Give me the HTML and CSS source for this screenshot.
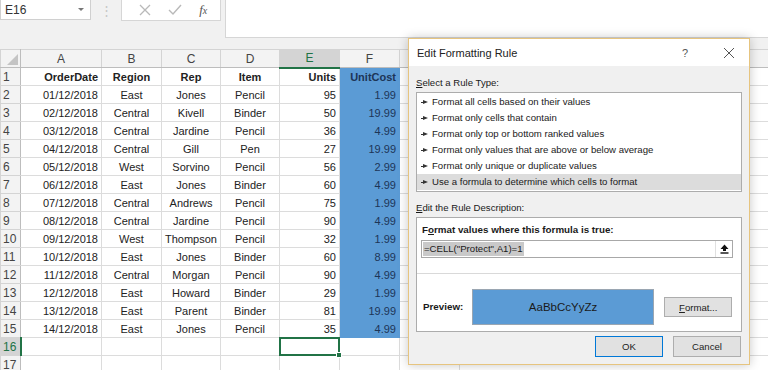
FILE: index.html
```html
<!DOCTYPE html>
<html lang="en">
<head>
    <meta charset="UTF-8">
    <title>Edit Formatting Rule</title>
    <link rel="stylesheet" href="styles.css">
</head>
<body>
    <div class="toolbar">
        <div class="namebox">
            <span>E16</span>
            <span class="caret"></span>
        </div>
        <div class="grip">&#8942;</div>
        <div class="fbuttons">
            <svg width="12" height="12" viewBox="0 0 12 12"><path d="M1 1 L11 11 M11 1 L1 11" stroke="#b9b9b9" stroke-width="1.3"/></svg>
            <svg width="14" height="12" viewBox="0 0 14 12"><path d="M1 6 L5 10 L13 1" stroke="#b9b9b9" stroke-width="1.4" fill="none"/></svg>
            <span class="fx">f<i>x</i></span>
        </div>
        <div class="formula"></div>
    </div>

    <table class="sheet">
        <colgroup>
            <col style="width:20px"><col style="width:81px"><col style="width:60px"><col style="width:59px"><col style="width:59px"><col style="width:60px"><col style="width:60px"><col style="width:60px"><col style="width:309px">
        </colgroup>
        <tr class="colhead">
            <th class="corner"><span class="tri"></span></th><th>A</th><th>B</th><th>C</th><th>D</th><th class="cur">E</th><th>F</th><th></th><th></th>
        </tr>
        <tr class="bold"><th>1</th><td class="r">OrderDate</td><td class="c">Region</td><td class="c">Rep</td><td class="c">Item</td><td class="r">Units</td><td class="r blue">UnitCost</td><td></td><td></td></tr>
        <tr><th>2</th><td class="r">01/12/2018</td><td class="c">East</td><td class="c">Jones</td><td class="c">Pencil</td><td class="r">95</td><td class="r blue">1.99</td><td></td><td></td></tr>
        <tr><th>3</th><td class="r">02/12/2018</td><td class="c">Central</td><td class="c">Kivell</td><td class="c">Binder</td><td class="r">50</td><td class="r blue">19.99</td><td></td><td></td></tr>
        <tr><th>4</th><td class="r">03/12/2018</td><td class="c">Central</td><td class="c">Jardine</td><td class="c">Pencil</td><td class="r">36</td><td class="r blue">4.99</td><td></td><td></td></tr>
        <tr><th>5</th><td class="r">04/12/2018</td><td class="c">Central</td><td class="c">Gill</td><td class="c">Pen</td><td class="r">27</td><td class="r blue">19.99</td><td></td><td></td></tr>
        <tr><th>6</th><td class="r">05/12/2018</td><td class="c">West</td><td class="c">Sorvino</td><td class="c">Pencil</td><td class="r">56</td><td class="r blue">2.99</td><td></td><td></td></tr>
        <tr><th>7</th><td class="r">06/12/2018</td><td class="c">East</td><td class="c">Jones</td><td class="c">Binder</td><td class="r">60</td><td class="r blue">4.99</td><td></td><td></td></tr>
        <tr><th>8</th><td class="r">07/12/2018</td><td class="c">Central</td><td class="c">Andrews</td><td class="c">Pencil</td><td class="r">75</td><td class="r blue">1.99</td><td></td><td></td></tr>
        <tr><th>9</th><td class="r">08/12/2018</td><td class="c">Central</td><td class="c">Jardine</td><td class="c">Pencil</td><td class="r">90</td><td class="r blue">4.99</td><td></td><td></td></tr>
        <tr><th>10</th><td class="r">09/12/2018</td><td class="c">West</td><td class="c">Thompson</td><td class="c">Pencil</td><td class="r">32</td><td class="r blue">1.99</td><td></td><td></td></tr>
        <tr><th>11</th><td class="r">10/12/2018</td><td class="c">East</td><td class="c">Jones</td><td class="c">Binder</td><td class="r">60</td><td class="r blue">8.99</td><td></td><td></td></tr>
        <tr><th>12</th><td class="r">11/12/2018</td><td class="c">Central</td><td class="c">Morgan</td><td class="c">Pencil</td><td class="r">90</td><td class="r blue">4.99</td><td></td><td></td></tr>
        <tr><th>13</th><td class="r">12/12/2018</td><td class="c">East</td><td class="c">Howard</td><td class="c">Binder</td><td class="r">29</td><td class="r blue">1.99</td><td></td><td></td></tr>
        <tr><th>14</th><td class="r">13/12/2018</td><td class="c">East</td><td class="c">Parent</td><td class="c">Binder</td><td class="r">81</td><td class="r blue">19.99</td><td></td><td></td></tr>
        <tr><th>15</th><td class="r">14/12/2018</td><td class="c">East</td><td class="c">Jones</td><td class="c">Pencil</td><td class="r">35</td><td class="r blue">4.99</td><td></td><td></td></tr>
        <tr><th class="cur">16</th><td></td><td></td><td></td><td></td><td class="active"></td><td></td><td></td><td></td></tr>
        <tr><th>17</th><td></td><td></td><td></td><td></td><td></td><td></td><td></td><td></td></tr>
    </table>

    <div class="dialog">
        <div class="titlebar">
            <span class="title">Edit Formatting Rule</span>
            <span class="help">?</span>
            <svg class="close" width="12" height="12" viewBox="0 0 12 12"><path d="M1 1 L11 11 M11 1 L1 11" stroke="#555" stroke-width="1"/></svg>
        </div>
        <div class="dbody">
            <div class="label"><u>S</u>elect a Rule Type:</div>
            <ul class="rules">
                <li><span class="arr"></span>Format all cells based on their values</li>
                <li><span class="arr"></span>Format only cells that contain</li>
                <li><span class="arr"></span>Format only top or bottom ranked values</li>
                <li><span class="arr"></span>Format only values that are above or below average</li>
                <li><span class="arr"></span>Format only unique or duplicate values</li>
                <li class="sel"><span class="arr"></span>Use a formula to determine which cells to format</li>
            </ul>
            <div class="label label2"><u>E</u>dit the Rule Description:</div>
            <div class="desc">
                <div class="desc-top">
                    <div class="blabel">F<u>o</u>rmat values where this formula is true:</div>
                    <div class="input">
                        <span class="seltext">=CELL("Protect",A1)=1</span>
                        <span class="pick">
                            <svg width="9" height="10" viewBox="0 0 9 10"><path d="M4.5 0.5 L8.5 5 L6 5 L6 7 L3 7 L3 5 L0.5 5 Z" fill="#111"/><rect x="0.5" y="8.3" width="8" height="1.4" fill="#111"/></svg>
                        </span>
                    </div>
                </div>
                <div class="preview-row">
                    <span class="blabel">Preview:</span>
                    <div class="preview">AaBbCcYyZz</div>
                    <button class="btn"><u>F</u>ormat...</button>
                </div>
            </div>
            <div class="actions">
                <button class="btn ok">OK</button>
                <button class="btn">Cancel</button>
            </div>
        </div>
    </div>
</body>
</html>
```

FILE: styles.css
```css
body {
    margin: 0;
    width: 768px;
    height: 370px;
    overflow: hidden;
    background: #fff;
    font-family: "Liberation Sans", Arial, sans-serif;
    color: #222;
    position: relative;
}

/* formula bar */
.toolbar {
    height: 49px;
    display: flex;
    align-items: flex-start;
    background: #f1f1f1;
}
.namebox {
    width: 91px;
    height: 20px;
    background: #fff;
    border: 1px solid #d0d0d0;
    border-top: none;
    display: flex;
    align-items: center;
    justify-content: space-between;
    padding: 0 6px 0 4px;
    box-sizing: border-box;
    font-size: 12px;
    color: #333;
}
.caret {
    width: 0;
    height: 0;
    border-left: 3px solid transparent;
    border-right: 3px solid transparent;
    border-top: 3px solid #777;
}
.grip {
    width: 30px;
    height: 21px;
    line-height: 21px;
    text-align: center;
    color: #c6c6c6;
    font-size: 13px;
}
.fbuttons {
    width: 100px;
    height: 21px;
    background: #fff;
    border: 1px solid #d6d6d6;
    border-top: none;
    box-sizing: border-box;
    display: flex;
    align-items: center;
    justify-content: space-around;
    padding: 0 4px 0 8px;
}
.fx {
    font-family: "Liberation Serif", serif;
    font-style: italic;
    font-size: 13px;
    color: #555;
}
.fx i {
    font-size: 10px;
}
.formula {
    flex: 1;
    height: 38px;
    margin-left: 4px;
    background: #fff;
    border-left: 1px solid #d6d6d6;
    border-bottom: 1px solid #d6d6d6;
    box-sizing: border-box;
}

/* grid */
.sheet {
    table-layout: fixed;
    border-collapse: collapse;
    width: 768px;
    font-size: 11px;
}
.sheet tr {
    height: 18px;
}
.sheet td {
    border: 1px solid #dcdcdc;
    padding: 0 3px;
    white-space: nowrap;
    overflow: hidden;
    line-height: 16px;
    color: #222;
}
.sheet th {
    background: #f3f3f3;
    border: 1px solid #d4d4d4;
    font-weight: normal;
    font-size: 12px;
    color: #444;
    padding: 0;
}
.sheet tr th:first-child {
    text-align: left;
    padding-left: 2px;
    border-right-color: #bdbdbd;
}
.colhead th {
    text-align: center;
    border-bottom-color: #bdbdbd;
}
.colhead th.corner {
    position: relative;
}
.tri {
    position: absolute;
    right: 2px;
    bottom: 2px;
    width: 0;
    height: 0;
    border-left: 11px solid transparent;
    border-bottom: 11px solid #c4c4c4;
}
.sheet th.cur {
    background: #d4d4d4;
    color: #217346;
}
.colhead th.cur {
    border-bottom: 2px solid #217346;
}
.sheet tr th.cur:first-child {
    border-right: 2px solid #217346;
}
.bold td {
    font-weight: bold;
}
.r { text-align: right; }
.c { text-align: center; }
.sheet td.blue {
    background: #5b9bd5;
    border-color: #5b9bd5;
    color: #1d3557;
}
.sheet td.active {
    position: relative;
    overflow: visible;
}
.active::after {
    content: "";
    position: absolute;
    left: -1px;
    top: -1px;
    right: -1px;
    bottom: -1px;
    border: 2px solid #217346;
}
.active::before {
    content: "";
    position: absolute;
    right: -3px;
    bottom: -3px;
    width: 4px;
    height: 4px;
    background: #217346;
    border: 1px solid #fff;
    z-index: 1;
}

/* dialog */
.dialog {
    position: absolute;
    left: 408px;
    top: 38px;
    width: 342px;
    height: 327px;
    box-sizing: border-box;
    border: 1px solid #e6c47f;
    background: #f0f0f0;
    box-shadow: 0 0 10px rgba(0, 0, 0, 0.22);
    font-size: 9.6px;
    color: #1a1a1a;
    display: flex;
    flex-direction: column;
}
.titlebar {
    height: 27px;
    background: #fff;
    display: flex;
    align-items: center;
    padding: 0 14px 0 8px;
    flex-shrink: 0;
}
.title {
    flex: 1;
    font-size: 11px;
    color: #222;
}
.help {
    font-size: 11px;
    color: #555;
    margin-right: 35px;
}
.dbody {
    padding: 0 7px;
}
.label {
    margin-top: 11px;
    line-height: 12px;
}
.label2 {
    margin-top: 10px;
}
.rules {
    list-style: none;
    margin: 3px 0 0;
    padding: 1px 0;
    background: #fff;
    border: 1px solid #acacac;
}
.rules li {
    height: 16px;
    line-height: 16px;
    padding-left: 4px;
    display: flex;
    align-items: center;
}
.rules li.sel {
    background: #dcdcdc;
}
.arr {
    width: 7px;
    height: 5px;
    margin-right: 4px;
    background:
        linear-gradient(#333, #333) left center / 3px 1px no-repeat;
    position: relative;
}
.arr::after {
    content: "";
    position: absolute;
    right: 0;
    top: 0;
    border-top: 2.5px solid transparent;
    border-bottom: 2.5px solid transparent;
    border-left: 5px solid #333;
}
.desc {
    margin-top: 3px;
    background: #fff;
    border: 1px solid #acacac;
    height: 115px;
    box-sizing: border-box;
}
.desc-top {
    padding: 6px 8px 15px 4px;
    border-bottom: 1px solid #d9d9d9;
}
.blabel {
    font-weight: bold;
    font-size: 9.8px;
    line-height: 12px;
    padding-left: 1px;
}
.input {
    margin-top: 4px;
    height: 18px;
    border: 1px solid #a8a8a8;
    box-sizing: border-box;
    display: flex;
    align-items: center;
    justify-content: space-between;
    padding-left: 1px;
}
.seltext {
    background: #c9c9c9;
    line-height: 14px;
    padding: 0 1px;
}
.pick {
    width: 16px;
    height: 16px;
    border-left: 1px solid #e0e0e0;
    display: flex;
    align-items: center;
    justify-content: center;
}
.preview-row {
    display: flex;
    align-items: center;
    padding: 15px 9px 0 5px;
}
.preview-row .blabel {
    width: 49px;
}
.preview {
    width: 184px;
    height: 36px;
    box-sizing: border-box;
    background: #5b9bd5;
    border: 1px solid #9aa6b2;
    display: flex;
    align-items: center;
    justify-content: center;
    font-size: 11.5px;
    color: #1a1a1a;
    margin-right: 10px;
}
.btn {
    width: 68px;
    height: 20px;
    font-family: "Liberation Sans", Arial, sans-serif;
    font-size: 9.6px;
    color: #222;
    background: #e1e1e1;
    border: 1px solid #adadad;
    padding: 0;
}
.actions {
    display: flex;
    justify-content: flex-end;
    gap: 10px;
    margin-top: 4px;
    padding-right: 1px;
}
.actions .btn {
    height: 21px;
    width: 68px;
}
.actions .ok {
    border-color: #0078d7;
}
```
